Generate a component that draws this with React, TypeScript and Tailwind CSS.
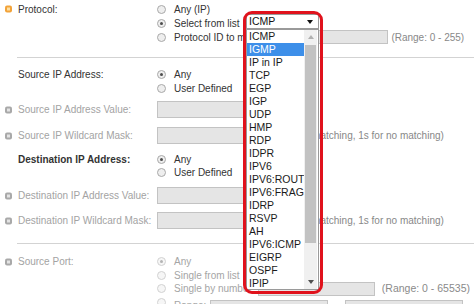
const protocols = [
  "ICMP",
  "IGMP",
  "IP in IP",
  "TCP",
  "EGP",
  "IGP",
  "UDP",
  "HMP",
  "RDP",
  "IDPR",
  "IPV6",
  "IPV6:ROUT",
  "IPV6:FRAG",
  "IDRP",
  "RSVP",
  "AH",
  "IPV6:ICMP",
  "EIGRP",
  "OSPF",
  "IPIP",
];

function Bullet({ orange }: { orange?: boolean }) {
  return (
    <span
      className={`absolute left-[5px] top-1/2 flex h-[7px] w-[7px] -translate-y-1/2 items-center justify-center rounded-[2px] ${
        orange ? "bg-[#f2a33a]" : "bg-[#a9a9a9]"
      }`}
    >
      <span className={`h-[3px] w-[3px] ${orange ? "bg-[#fde0a4]" : "bg-[#e4e4e4]"}`} />
    </span>
  );
}

function Radio({ checked, disabled }: { checked?: boolean; disabled?: boolean }) {
  return (
    <span
      className={`flex h-[9px] w-[9px] shrink-0 items-center justify-center rounded-full border ${
        disabled ? "border-[#d2d2d2] bg-[#f6f6f6]" : "border-[#a9a9a9] bg-[#eeeeee]"
      }`}
    >
      {checked && (
        <span className={`h-[3px] w-[3px] rounded-full ${disabled ? "bg-[#b4b4b4]" : "bg-[#4d4d4d]"}`} />
      )}
    </span>
  );
}

function Option({
  label,
  checked,
  disabled,
  className,
  children,
}: {
  label: string;
  checked?: boolean;
  disabled?: boolean;
  className: string;
  children?: React.ReactNode;
}) {
  return (
    <div className={`relative flex items-center ${className}`}>
      <Radio checked={checked} disabled={disabled} />
      <span className={`ml-[8px] whitespace-nowrap ${disabled ? "text-[#a5a5a5]" : "text-[#333]"}`}>{label}</span>
      {children}
    </div>
  );
}

function Field({ className }: { className: string }) {
  return <span className={`block h-[17px] shrink-0 border border-[#c3c3c3] bg-[#e5e5e5] ${className}`} />;
}

function Label({
  text,
  bullet,
  orange,
  muted,
  bold,
  className,
}: {
  text: string;
  bullet?: boolean;
  orange?: boolean;
  muted?: boolean;
  bold?: boolean;
  className: string;
}) {
  return (
    <div className={`relative flex w-[157px] shrink-0 items-center pl-[18px] ${className}`}>
      {bullet && <Bullet orange={orange} />}
      <span className={`whitespace-nowrap ${muted ? "text-[#a3a3a3]" : "text-[#333]"} ${bold ? "font-bold" : ""}`}>
        {text}
      </span>
    </div>
  );
}

function ProtocolDropdown() {
  return (
    <div className="absolute left-[88px] top-[-2px] z-10">
      {/* closed select */}
      <div className="absolute left-[1px] top-0 flex h-[15px] w-[73px] items-center justify-between border border-[#9a9a9a] bg-white pl-[2px] pr-[5px] text-[10.5px] text-[#111]">
        <span>ICMP</span>
        <span className="h-0 w-0 border-x-[3px] border-t-[4px] border-x-transparent border-t-[#111]" />
      </div>
      {/* open list */}
      <div className="absolute left-[1px] top-[15px] flex h-[261px] w-[73px] border border-[#9a9a9a] bg-white">
        <ul className="flex-1 text-[10.5px] text-[#1a1a1a]">
          {protocols.map((p) => (
            <li
              key={p}
              className={`h-[13px] whitespace-nowrap pl-[2px] leading-[13px] ${
                p === "IGMP" ? "bg-[#3d8fe9] text-white" : ""
              }`}
            >
              {p}
            </li>
          ))}
        </ul>
        <div className="mr-[1px] flex w-[14px] flex-col bg-[#f0f0f0]">
          <div className="flex h-[14px] items-center justify-center">
            <span className="h-0 w-0 border-x-[3.5px] border-b-[4px] border-x-transparent border-b-[#b0b0b0]" />
          </div>
          <div className="mx-[1px] mt-[1px] h-[198px] bg-[#c2c2c2]" />
          <div className="flex-1" />
          <div className="flex h-[14px] items-center justify-center">
            <span className="h-0 w-0 border-x-[3.5px] border-t-[4px] border-x-transparent border-t-[#505050]" />
          </div>
        </div>
      </div>
      {/* highlight ring */}
      <div className="pointer-events-none absolute left-[-2px] top-[-3px] h-[283px] w-[80px] rounded-[9px] border-[3px] border-[#e0121c]" />
    </div>
  );
}

export default function App() {
  return (
    <div className="h-[304px] w-[474px] overflow-hidden bg-white font-['Liberation_Sans',Arial,sans-serif] text-[10px]">
      {/* Protocol */}
      <div className="mt-[2px] flex">
        <Label text="Protocol:" bullet orange className="h-[14px]" />
        <div className="flex flex-col">
          <Option label="Any (IP)" className="h-[14px]" />
          <Option label="Select from list" checked className="h-[14px]">
            <ProtocolDropdown />
          </Option>
          <Option label="Protocol ID to match:" className="h-[14px]">
            <Field className="ml-[5px] !h-[14px] w-[116px]" />
            <span className="ml-[3px] whitespace-nowrap text-[#888]">(Range: 0 - 255)</span>
          </Option>
        </div>
      </div>

      <div className="ml-[17px] mt-[13px] h-px bg-[#d3d3d3]" />

      {/* Source IP */}
      <div className="mt-[9px] flex">
        <Label text="Source IP Address:" className="h-[14px]" />
        <div className="flex flex-col">
          <Option label="Any" checked className="h-[14px]" />
          <Option label="User Defined" className="h-[14px]" />
        </div>
      </div>
      <div className="mt-[6px] flex h-[17px] items-center">
        <Label text="Source IP Address Value:" bullet muted className="h-[17px]" />
        <Field className="w-[121px]" />
      </div>
      <div className="mt-[9px] flex h-[17px] items-center">
        <Label text="Source IP Wildcard Mask:" bullet muted className="h-[17px]" />
        <Field className="w-[121px]" />
        <span className="ml-[3px] whitespace-nowrap text-[#888]">(0s for matching, 1s for no matching)</span>
      </div>

      {/* Destination IP */}
      <div className="mt-[9px] flex">
        <Label text="Destination IP Address:" bold className="h-[13px]" />
        <div className="flex flex-col">
          <Option label="Any" checked className="h-[13px]" />
          <Option label="User Defined" className="h-[13px]" />
        </div>
      </div>
      <div className="mt-[8px] flex h-[17px] items-center">
        <Label text="Destination IP Address Value:" bullet muted className="h-[17px]" />
        <Field className="w-[121px]" />
      </div>
      <div className="mt-[8px] flex h-[17px] items-center">
        <Label text="Destination IP Wildcard Mask:" bullet muted className="h-[17px]" />
        <Field className="w-[121px]" />
        <span className="ml-[3px] whitespace-nowrap text-[#888]">(0s for matching, 1s for no matching)</span>
      </div>

      <div className="ml-[17px] mt-[14px] h-px bg-[#d3d3d3]" />

      {/* Source Port */}
      <div className="mt-[11px] flex">
        <Label text="Source Port:" bullet muted className="h-[13.5px]" />
        <div className="flex flex-col">
          <Option label="Any" checked disabled className="h-[13.5px]" />
          <Option label="Single from list" disabled className="h-[13.5px]">
            <Field className="ml-[5px] !h-[14px] w-[70px]" />
          </Option>
          <Option label="Single by number" disabled className="h-[13.5px]">
            <Field className="ml-[6px] !h-[14px] w-[117px]" />
            <span className="ml-[7px] whitespace-nowrap text-[10.5px] text-[#8a8a8a]">(Range: 0 - 65535)</span>
          </Option>
          <Option label="Range:" disabled className="h-[13.5px] !items-start pt-[2px]">
            <Field className="ml-[4px] mt-[2px] w-[118px]" />
            <Field className="ml-[17px] mt-[2px] w-[118px]" />
          </Option>
        </div>
      </div>
    </div>
  );
}
